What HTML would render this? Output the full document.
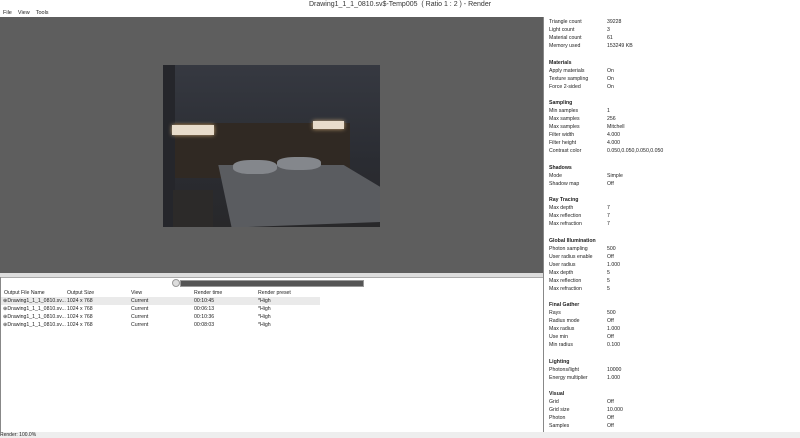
<!DOCTYPE html>
<html><head><style>
body{margin:0;width:800px;height:438px;overflow:hidden;background:#fff;font-family:"Liberation Sans",sans-serif;position:relative;font-size:5.5px;color:#222}
.a{position:absolute;white-space:nowrap}
#title{left:0;top:0;width:800px;height:9px;background:#fff;font-size:7px;text-align:center;line-height:9px;color:#333}
#menu{left:0;top:9px;width:543px;height:8px;line-height:8px;font-size:5.5px}
#vp{left:0;top:17px;width:543px;height:256px;background:#5e5e5e}
#img{left:163px;top:65px;width:217px;height:162px;background:linear-gradient(#363941,#2a2c32 60%,#28282a);overflow:hidden}
#rp{left:543px;top:17px;width:257px;height:415px;border-left:1px solid #888;background:#fff}
.r{position:absolute;left:5px;top:1px;font-size:5.2px;line-height:8px}
.v{position:absolute;left:63px;font-size:5.2px;line-height:8px}
.h{font-weight:bold}
#status{left:0;top:432px;width:800px;height:6px;background:#eee;font-size:5px;line-height:6px}
</style></head><body>
<div class="a" id="title">Drawing1_1_1_0810.sv$-Temp005 &nbsp;( Ratio 1 : 2 ) - Render</div>
<div class="a" id="menu"><span style="margin-left:3px">File</span><span style="margin-left:6px">View</span><span style="margin-left:6px">Tools</span></div>
<div class="a" id="vp"></div>
<div class="a" id="img">
 <div class="a" style="left:0;top:0;width:12px;height:162px;background:#25262b"></div>
 <div class="a" style="left:12px;top:58px;width:175px;height:55px;background:#302923"></div>
 <div class="a" style="left:9px;top:60px;width:42px;height:10px;background:#e8dccb;box-shadow:0 0 4px #c9a878"></div>
 <div class="a" style="left:150px;top:56px;width:31px;height:8px;background:#e8dccb;box-shadow:0 0 4px #c9a878"></div>
 <div class="a" style="left:10px;top:125px;width:40px;height:37px;background:#2c2a29"></div>
 <div class="a" style="left:52px;top:100px;width:165px;height:62px;background:#5a5c60;clip-path:polygon(2% 0,78% 0,100% 35%,100% 92%,20% 100%,10% 100%)"></div>
 <div class="a" style="left:70px;top:95px;width:44px;height:14px;background:#84878c;border-radius:40%"></div>
 <div class="a" style="left:114px;top:92px;width:44px;height:13px;background:#84878c;border-radius:40%"></div>
</div>
<div class="a" style="left:0;top:273px;width:543px;height:4px;background:#ddd;border-bottom:1px solid #aaa"></div>
<div class="a" style="left:172px;top:279px;width:6px;height:6px;border-radius:50%;background:#ddd;border:1px solid #999"></div>
<div class="a" style="left:180px;top:280px;width:182px;height:5px;background:#555;border:1px solid #999"></div>
<div class="a" style="left:0;top:297px;width:320px;height:8px;background:#eaeaea"></div>
<div class="a" style="left:4px;top:289px;font-size:5.2px;line-height:8px">Output File Name</div>
<div class="a" style="left:67px;top:289px;font-size:5.2px;line-height:8px">Output Size</div>
<div class="a" style="left:131px;top:289px;font-size:5.2px;line-height:8px">View</div>
<div class="a" style="left:194px;top:289px;font-size:5.2px;line-height:8px">Render time</div>
<div class="a" style="left:258px;top:289px;font-size:5.2px;line-height:8px">Render preset</div>
<div class="a" style="left:3px;top:297px;font-size:5.2px;line-height:8px">
<div>⊕Drawing1_1_1_0810.sv...</div><div>⊕Drawing1_1_1_0810.sv...</div><div>⊕Drawing1_1_1_0810.sv...</div><div>⊕Drawing1_1_1_0810.sv...</div></div>
<div class="a" style="left:67px;top:297px;font-size:5.2px;line-height:8px"><div>1024 x 768</div><div>1024 x 768</div><div>1024 x 768</div><div>1024 x 768</div></div>
<div class="a" style="left:131px;top:297px;font-size:5.2px;line-height:8px"><div>Current</div><div>Current</div><div>Current</div><div>Current</div></div>
<div class="a" style="left:194px;top:297px;font-size:5.2px;line-height:8px"><div>00:10:45</div><div>00:06:13</div><div>00:10:36</div><div>00:08:03</div></div>
<div class="a" style="left:258px;top:297px;font-size:5.2px;line-height:8px"><div>*High</div><div>*High</div><div>*High</div><div>*High</div></div>
<div class="a" style="left:0;top:277px;width:1px;height:155px;background:#888"></div>
<div class="a" id="rp">
<div class="r" style="top:1px">Triangle count<br>Light count<br>Material count<br>Memory used</div>
<div class="v" style="top:1px">39228<br>3<br>61<br>153249 KB</div>
<div class="r" style="top:42px"><span class="h">Materials</span><br>Apply materials<br>Texture sampling<br>Force 2-sided</div>
<div class="v" style="top:42px"><br>On<br>On<br>On</div>
<div class="r" style="top:82px"><span class="h">Sampling</span><br>Min samples<br>Max samples<br>Max samples<br>Filter width<br>Filter height<br>Contrast color</div>
<div class="v" style="top:82px"><br>1<br>256<br>Mitchell<br>4.000<br>4.000<br>0.050,0.050,0.050,0.050</div>
<div class="r" style="top:147px"><span class="h">Shadows</span><br>Mode<br>Shadow map</div>
<div class="v" style="top:147px"><br>Simple<br>Off</div>
<div class="r" style="top:179px"><span class="h">Ray Tracing</span><br>Max depth<br>Max reflection<br>Max refraction</div>
<div class="v" style="top:179px"><br>7<br>7<br>7</div>
<div class="r" style="top:220px"><span class="h">Global Illumination</span><br>Photon sampling<br>User radius enable<br>User radius<br>Max depth<br>Max reflection<br>Max refraction</div>
<div class="v" style="top:220px"><br>500<br>Off<br>1.000<br>5<br>5<br>5</div>
<div class="r" style="top:284px"><span class="h">Final Gather</span><br>Rays<br>Radius mode<br>Max radius<br>Use min<br>Min radius</div>
<div class="v" style="top:284px"><br>500<br>Off<br>1.000<br>Off<br>0.100</div>
<div class="r" style="top:341px"><span class="h">Lighting</span><br>Photons/light<br>Energy multiplier</div>
<div class="v" style="top:341px"><br>10000<br>1.000</div>
<div class="r" style="top:373px"><span class="h">Visual</span><br>Grid<br>Grid size<br>Photon<br>Samples</div>
<div class="v" style="top:373px"><br>Off<br>10.000<br>Off<br>Off</div>
</div>
<div class="a" id="status">Render: 100.0%</div>
</body></html>
